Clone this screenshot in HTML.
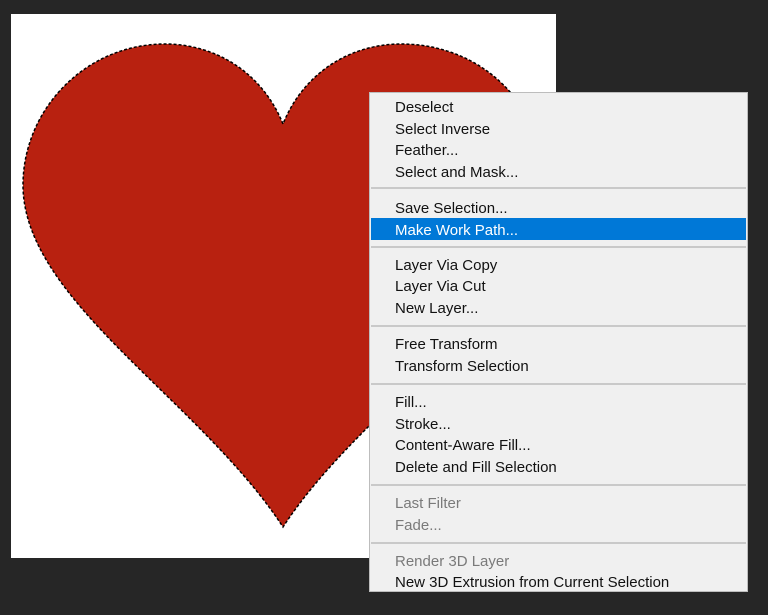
<!DOCTYPE html>
<html><head><style>
body{margin:0;width:768px;height:615px;background:#262626;position:relative;overflow:hidden;font-family:"Liberation Sans",sans-serif}
.canvas{position:absolute;left:11px;top:14px;width:545px;height:544px;background:#fff}
svg{position:absolute;left:0;top:0}
.menu{position:absolute;left:369px;top:92px;width:379px;height:500px;background:#f0f0f0;border:1px solid #bdbdbd;box-sizing:border-box}
.it{position:absolute;left:25px;font-size:15px;color:#111;line-height:20px;white-space:nowrap;margin-top:2px}
.dis{color:#7a7a7a}
.sep{position:absolute;left:1px;right:1px;height:2px;background:#c9c9c9}
.hl{position:absolute;left:1px;right:1px;top:125px;height:22px;background:#0078d7}
</style></head><body>
<div class="canvas"></div>
<svg width="768" height="615"><path d="M283,124 C262,72 215,44 165,44 C85,44 23,110 23,185 C23,300 200,400 283,527 C366,400 545,300 545,185 C545,110 486,44 401,44 C351,44 304,72 283,124 Z" fill="#b82110" stroke="#000" stroke-width="1.5" stroke-dasharray="3,2"/></svg>
<div class="menu">
<div class="hl"></div>
<div class="it" style="top:3px">Deselect</div>
<div class="it" style="top:25px">Select Inverse</div>
<div class="it" style="top:46px">Feather...</div>
<div class="it" style="top:68px">Select and Mask...</div>
<div class="sep" style="top:94px"></div>
<div class="it" style="top:104px">Save Selection...</div>
<div class="it" style="top:126px;color:#fff">Make Work Path...</div>
<div class="sep" style="top:153px"></div>
<div class="it" style="top:161px">Layer Via Copy</div>
<div class="it" style="top:182px">Layer Via Cut</div>
<div class="it" style="top:204px">New Layer...</div>
<div class="sep" style="top:232px"></div>
<div class="it" style="top:240px">Free Transform</div>
<div class="it" style="top:262px">Transform Selection</div>
<div class="sep" style="top:290px"></div>
<div class="it" style="top:298px">Fill...</div>
<div class="it" style="top:320px">Stroke...</div>
<div class="it" style="top:341px">Content-Aware Fill...</div>
<div class="it" style="top:363px">Delete and Fill Selection</div>
<div class="sep" style="top:391px"></div>
<div class="it dis" style="top:399px">Last Filter</div>
<div class="it dis" style="top:421px">Fade...</div>
<div class="sep" style="top:449px"></div>
<div class="it dis" style="top:457px">Render 3D Layer</div>
<div class="it" style="top:478px">New 3D Extrusion from Current Selection</div>
</div>
</body></html>
